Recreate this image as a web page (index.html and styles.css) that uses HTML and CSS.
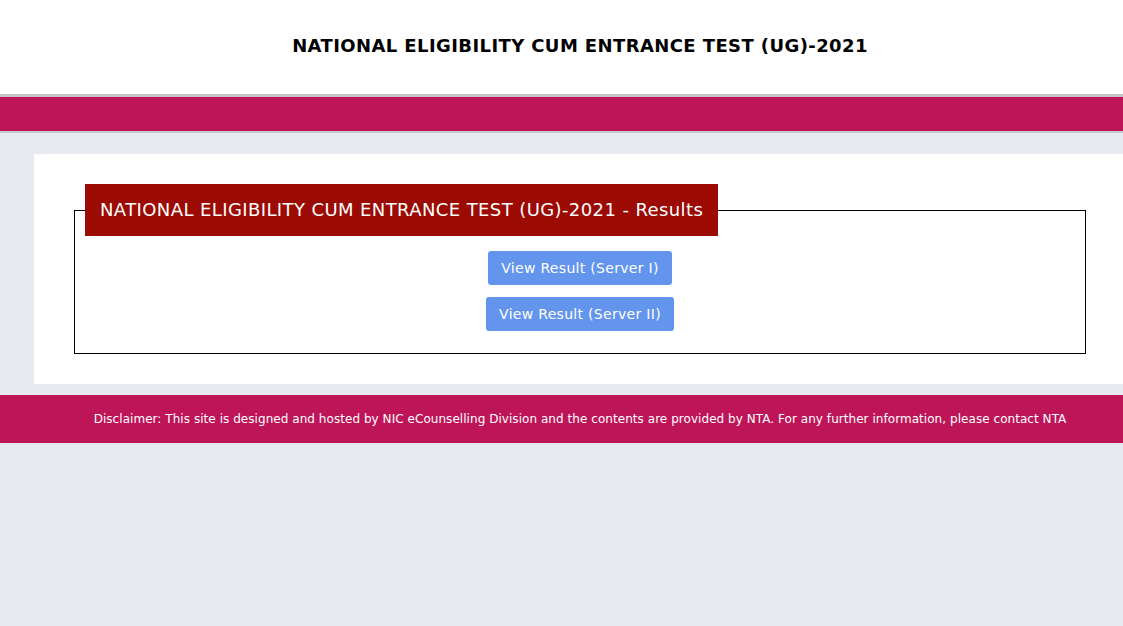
FILE: index.html
```html
<!DOCTYPE html>
<html lang="en">
<head>
<meta charset="utf-8">
<title>NEET (UG)-2021 Results</title>
<link rel="stylesheet" href="styles.css">
</head>
<body>
<div class="page">
  <header class="header">
    <h1 class="site-title">NATIONAL ELIGIBILITY CUM ENTRANCE TEST (UG)-2021</h1>
  </header>
  <div class="navbar"></div>
  <main class="main">
    <section class="card">
      <fieldset class="result-box">
        <legend class="result-legend">NATIONAL ELIGIBILITY CUM ENTRANCE TEST (UG)-2021 - Results</legend>
        <div class="buttons">
          <a class="btn" href="#">View Result (Server I)</a>
          <a class="btn" href="#">View Result (Server II)</a>
        </div>
      </fieldset>
    </section>
  </main>
  <footer class="footer">
    Disclaimer: This site is designed and hosted by NIC eCounselling Division and the contents are provided by NTA. For any further information, please contact NTA
  </footer>
</div>
</body>
</html>
```
FILE: styles.css
```css
html, body {
  margin: 0;
  padding: 0;
  overflow: hidden;
  background: #e7eaee;
}
body {
  font-family: "DejaVu Sans", Tahoma, sans-serif;
  color: #000;
}
.page {
  width: 1160px;
  min-height: 626px;
  background: #e7eaee;
}
.header {
  height: 97px;
  background: #fff;
  border-bottom: 3px solid #c4c4c4;
  display: flex;
  align-items: center;
  justify-content: center;
  padding-bottom: 4px;
  box-sizing: border-box;
}
.site-title {
  margin: 0;
  font-size: 18px;
  font-weight: bold;
  letter-spacing: 0.4px;
}
.navbar {
  height: 34px;
  background: #be1558;
  border-bottom: 2px solid #c8c9cb;
}
.main {
  padding: 21px 34px 11px 34px;
}
.card {
  background: #fff;
  height: 230px;
  padding: 30px 40px 0 40px;
  box-sizing: border-box;
}
.result-box {
  margin: 0;
  border: 1px solid #000;
  padding: 0 10px 22px 10px;
}
.result-legend {
  background: #9c0b03;
  color: #fff;
  font-size: 18px;
  letter-spacing: 0.4px;
  height: 52px;
  line-height: 52px;
  padding: 0 15px;
  box-sizing: border-box;
}
.buttons {
  display: flex;
  flex-direction: column;
  align-items: center;
  gap: 12px;
  padding-top: 15px;
}
.btn {
  display: inline-block;
  background: #6495ed;
  color: #fff;
  text-decoration: none;
  font-size: 14px;
  letter-spacing: 0.3px;
  height: 34px;
  line-height: 34px;
  padding: 0 13px;
  border-radius: 3px;
}
.footer {
  height: 48px;
  background: #be1558;
  color: #fff;
  font-size: 12px;
  letter-spacing: 0.05px;
  display: flex;
  align-items: center;
  justify-content: center;
}
```
